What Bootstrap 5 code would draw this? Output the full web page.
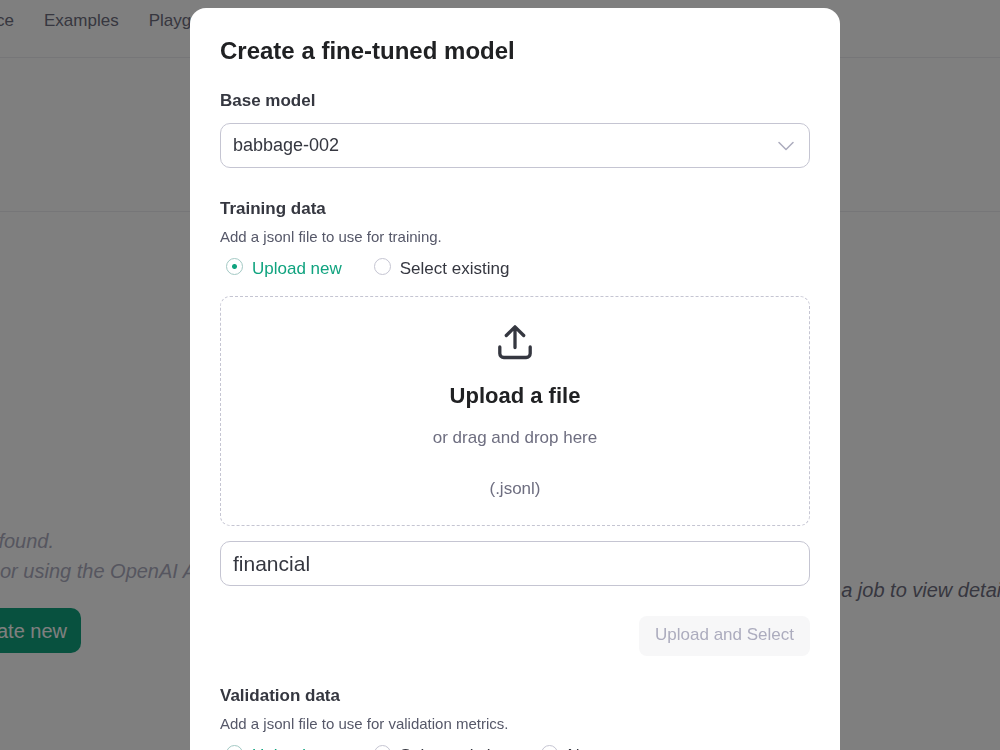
<!DOCTYPE html>
<html lang="en">
<head>
<meta charset="utf-8">
<meta name="viewport" content="width=device-width, initial-scale=1">
<title>Fine-tuning</title>
<link href="https://cdn.jsdelivr.net/npm/bootstrap@5.3.0/dist/css/bootstrap.min.css" rel="stylesheet">
<style>
  :root { --ink: #202123; --ink-2: #353740; --muted: #6e6e80; --faint: #acacbe; --line: #c5c5d2; --green: #10a37f; }
  body { font-family: "Liberation Sans", Arial, sans-serif; font-size: 17px; line-height: 24px; color: var(--ink-2); overflow: hidden; }
  .topbar { height: 58px; padding-bottom: 16px; border-bottom: 1px solid #ececf1; }
  .topbar-links { gap: 30px; margin-left: -70px; }
  .topbar-links a { color: var(--muted); text-decoration: none; white-space: nowrap; }
  .topbar-links a:first-child { width: 84px; display: flex; justify-content: flex-end; }
  .page-head { height: 154px; border-bottom: 1px solid #ececf1; }
  .jobs { font-size: 20px; line-height: 30px; font-style: italic; white-space: nowrap; }
  .jobs-list { width: 220px; padding-top: 314px; color: var(--faint); }
  .jobs-first { width: 54px; }
  .jobs-action { width: 81px; margin-top: 22px; }
  .jobs-detail { padding: 363px 0 0 560px; color: var(--muted); }
  .btn-create { height: 45px; padding: 0 14px; font-size: 20px; color: #fff; background: var(--green); border: 0; border-radius: 10px; white-space: nowrap; flex-shrink: 0; }
  .overlay { background: rgba(0, 0, 0, .5); padding-left: 30px; overflow: hidden; }
  .overlay .modal-dialog { max-width: 650px; margin: 8px auto; }
  .overlay .modal-content { border: 0; border-radius: 16px; padding: 27px 30px; color: var(--ink-2); }
  .dialog-title { font-size: 24px; line-height: 32px; font-weight: 700; color: var(--ink); margin-bottom: 22px; }
  .field-title { font-size: 17px; line-height: 24px; font-weight: 700; margin: 0; }
  .field-note { font-size: 15px; line-height: 22px; color: #565869; margin: 5px 0 9px; }
  .field-box { height: 45px; padding: 0 12px; font-size: 18px; color: var(--ink-2); border: 1px solid var(--line); border-radius: 10px; }
  select.field-box { margin-top: 10px; margin-bottom: 29px;
    background-image: url("data:image/svg+xml,%3Csvg xmlns='http://www.w3.org/2000/svg' viewBox='0 0 16 16'%3E%3Cpath d='M1 4.5l7 7 7-7' fill='none' stroke='%23acacbe' stroke-width='1.5' stroke-linecap='round' stroke-linejoin='round'/%3E%3C/svg%3E");
    background-size: 16px 16px; background-position: right 15px center; }
  .name-box { font-size: 21px; }
  .choices { gap: 32px; padding-left: 6px; }
  .choices label { color: var(--ink-2); }
  .choices input { appearance: none; flex-shrink: 0; width: 17px; height: 17px; margin: 0 9px 6px 0; border: 1px solid var(--line); border-radius: 50%; background: #fff; }
  .choices input:checked { border-color: #a3c9c4; background: radial-gradient(circle, var(--green) 0 2px, #fff 3px); }
  .choices input:checked + label { color: var(--green); }
  .dropzone { border: 1px dashed var(--line); border-radius: 10px; height: 230px; margin: 15px 0; padding-top: 24px; color: var(--muted); }
  .dropzone h3 { font-size: 22px; line-height: 30px; font-weight: 700; color: var(--ink); margin: 16px 0 14px; }
  .dropzone p { font-size: 17px; line-height: 26px; margin: 0 0 25px; }
  .btn-upload, .btn-upload:disabled { height: 40px; padding: 0 16px 2px; font-size: 17px; color: var(--faint); background: #f7f7f8; border: 0; border-radius: 8px; opacity: 1; margin: 30px 0 28px; }
</style>
</head>
<body>
<header class="topbar d-flex align-items-center">
  <nav class="topbar-links d-flex" aria-label="Main">
    <a href="#">Reference</a>
    <a href="#">Examples</a>
    <a href="#">Playground</a>
  </nav>
</header>
<div class="page-head"></div>
<main class="jobs d-flex">
  <section class="jobs-list flex-shrink-0">
    <div class="jobs-first d-flex justify-content-end">found.</div>
    <div>or using the OpenAI API.</div>
    <div class="jobs-action d-flex justify-content-end">
      <button type="button" class="btn btn-create">Create new</button>
    </div>
  </section>
  <section class="jobs-detail">Select a job to view details</section>
</main>

<div class="modal d-block overlay" role="dialog" aria-modal="true" aria-labelledby="dialogTitle">
  <div class="modal-dialog">
    <form class="modal-content">
      <h1 class="dialog-title" id="dialogTitle">Create a fine-tuned model</h1>
      <label class="field-title" for="baseModel">Base model</label>
      <select class="form-select field-box" id="baseModel">
        <option>babbage-002</option>
      </select>

      <h2 class="field-title">Training data</h2>
      <p class="field-note">Add a jsonl file to use for training.</p>
      <div class="choices d-flex">
        <div class="d-flex align-items-center"><input type="radio" name="training" id="trainNew" checked><label for="trainNew">Upload new</label></div>
        <div class="d-flex align-items-center"><input type="radio" name="training" id="trainOld"><label for="trainOld">Select existing</label></div>
      </div>
      <div class="dropzone text-center">
        <svg width="44" height="44" viewBox="0 0 44 44" fill="none" stroke="#353740" stroke-width="3.3" stroke-linecap="round" stroke-linejoin="round" aria-hidden="true" class="d-block mx-auto">
          <path d="M22 26.5V6M13.3 14.5L22 5.8l8.700 8.700M6.800 26v6.500a4 4 0 0 0 4 4h22.400a4 4 0 0 0 4-4V26"/>
        </svg>
        <h3>Upload a file</h3>
        <p>or drag and drop here</p>
        <p>(.jsonl)</p>
      </div>
      <input type="text" class="form-control field-box name-box" value="financial" aria-label="File name">
      <button type="button" class="btn btn-upload align-self-end" disabled>Upload and Select</button>

      <h2 class="field-title">Validation data</h2>
      <p class="field-note">Add a jsonl file to use for validation metrics.</p>
      <div class="choices d-flex">
        <div class="d-flex align-items-center"><input type="radio" name="validation" id="valNew" checked><label for="valNew">Upload new</label></div>
        <div class="d-flex align-items-center"><input type="radio" name="validation" id="valOld"><label for="valOld">Select existing</label></div>
        <div class="d-flex align-items-center"><input type="radio" name="validation" id="valNone"><label for="valNone">None</label></div>
      </div>
    </form>
  </div>
</div>
<script src="https://cdn.jsdelivr.net/npm/bootstrap@5.3.0/dist/js/bootstrap.bundle.min.js"></script>
</body>
</html>
